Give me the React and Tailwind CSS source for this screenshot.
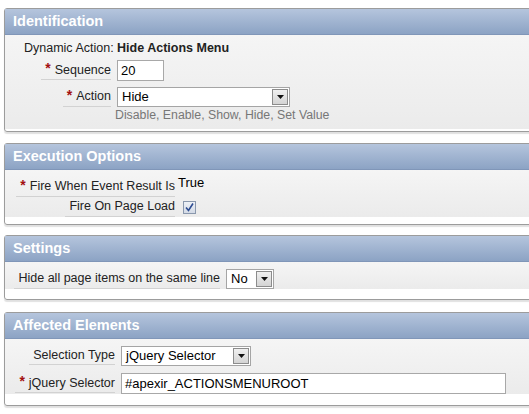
import React from 'react'

const font = { fontFamily: '"Liberation Sans", Arial, sans-serif' }

const Star = () => (
  <span className="mr-[4px] text-[14px] font-bold leading-none text-[#a31010] relative top-[-2px]">*</span>
)

const Label = ({ req, children }) => (
  <span className="inline-flex items-center border-b border-[#d2d2d2] pl-[4px] h-[19px] text-[12.5px] text-[#222] leading-none">
    {req && <Star />}
    {children}
  </span>
)

const Arrow = () => (
  <span className="flex h-[16px] w-[16px] items-center justify-center border border-[#8c8c8c] bg-gradient-to-b from-[#f0f0f0] to-[#d4d4d4]">
    <svg width="7" height="4" viewBox="0 0 7 4">
      <path d="M0 0 L7 0 L3.5 4 Z" fill="#111" />
    </svg>
  </span>
)

const Select = ({ value, width }) => (
  <div
    className="flex h-[20px] items-center justify-between border border-[#a5a5a5] bg-white pl-[4px] pr-[1px] text-[13px] text-black"
    style={{ width }}
  >
    <span>{value}</span>
    <Arrow />
  </div>
)

const Input = ({ value, width }) => (
  <div
    className="flex h-[21px] items-center border border-[#a8a8a8] bg-white pl-[3px] text-[13px] text-black"
    style={{ width }}
  >
    {value}
  </div>
)

const Panel = ({ title, children, className }) => (
  <div className={`ml-[4px] w-[560px] rounded-[3px] border border-[#9c9c9c] shadow-[0_2px_1px_rgba(0,0,0,0.12)] ${className}`}>
    <div className="flex h-[26px] items-center border-b border-[#8096b8] bg-gradient-to-b from-[#b5c5dd] to-[#8ca3c4] pl-[8px] text-[14.5px] font-bold text-white">
      {title}
    </div>
    <div className="bg-gradient-to-b from-[#f5f5f5] to-[#ebebeb]">{children}</div>
  </div>
)

const Row = ({ labelWidth, label, req, children, className }) => (
  <div className={`flex items-center ${className}`}>
    <div className="flex justify-end" style={{ width: labelWidth }}>
      <Label req={req}>{label}</Label>
    </div>
    <div className="ml-[6px]">{children}</div>
  </div>
)

export default function App() {
  return (
    <div className="w-[529px] h-[414px] overflow-hidden bg-white pt-[8px]" style={font}>
      <Panel title="Identification" className="h-[124px]">
        <div className="pt-[5px] pb-[6px]">
          <div className="flex h-[16px] items-center pl-[19px] text-[12.5px] text-[#222]">
            Dynamic Action:&nbsp;<span className="font-bold">Hide Actions Menu</span>
          </div>
          <Row labelWidth={106} label="Sequence" req className="mt-[4px] h-[21px]">
            <Input value="20" width={47} />
          </Row>
          <Row labelWidth={106} label="Action" req className="mt-[6px] h-[20px]">
            <Select value="Hide" width={173} />
          </Row>
          <div className="flex h-[16px] items-center pl-[110px] text-[12.3px] text-[#777]">
            Disable, Enable, Show, Hide, Set Value
          </div>
        </div>
      </Panel>

      <Panel title="Execution Options" className="mt-[11px] h-[82px]">
        <div className="pt-[7px]">
          <div className="flex h-[20px] items-center">
            <div className="flex w-[170px] justify-end">
              <Label req>Fire When Event Result Is</Label>
            </div>
            <span className="ml-[3px] relative top-[-4px] text-[13px] text-black">True</span>
          </div>
          <div className="flex h-[20px] items-center">
            <div className="flex w-[170px] justify-end">
              <Label>Fire On Page Load</Label>
            </div>
            <span className="ml-[8px] flex h-[13px] w-[13px] items-center justify-center border border-[#8a98ad] bg-gradient-to-b from-[#eef1f6] to-[#d3dae6]">
              <svg width="9" height="9" viewBox="0 0 9 9">
                <path d="M1 4.5 L3.5 7.5 L8 0.5" stroke="#2d4c91" strokeWidth="1.6" fill="none" />
              </svg>
            </span>
          </div>
        </div>
      </Panel>

      <Panel title="Settings" className="mt-[10px] h-[65px]">
        <div className="pt-[7px]">
          <Row labelWidth={215} label="Hide all page items on the same line" className="h-[20px]">
            <Select value="No" width={48} />
          </Row>
        </div>
      </Panel>

      <Panel title="Affected Elements" className="mt-[12px] h-[94px]">
        <div className="pt-[6px]">
          <Row labelWidth={110} label="Selection Type" className="h-[21px]">
            <Select value="jQuery Selector" width={130} />
          </Row>
          <Row labelWidth={110} label="jQuery Selector" req className="mt-[7px] h-[21px]">
            <Input value="#apexir_ACTIONSMENUROOT" width={385} />
          </Row>
        </div>
      </Panel>
    </div>
  )
}
